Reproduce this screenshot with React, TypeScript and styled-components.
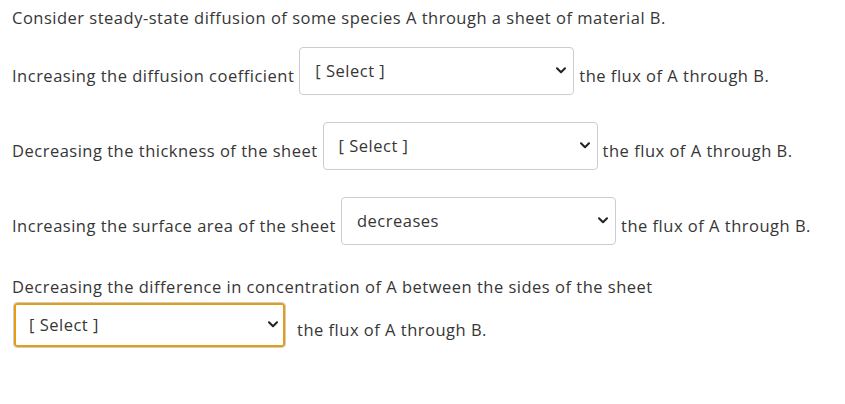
import React from 'react';
import styled, { createGlobalStyle } from 'styled-components';

const GlobalStyle = createGlobalStyle`
	body {
		margin: 0;
		background: #ffffff;
		font-family: 'Open Sans', Lato, sans-serif;
		font-size: 16.5px;
		letter-spacing: 0.5px;
		color: #363636;
	}
`;

const Page = styled.div`
	padding: 6px 12px 0 12px;
	display: flex;
	flex-direction: column;
`;

const Para = styled.p<{ $gap?: number }>`
	margin: 0;
	margin-top: ${(p) => p.$gap ?? 0}px;
	line-height: 24px;
`;

const Row = styled.div<{ $gap: number }>`
	display: flex;
	align-items: flex-start;
	margin-top: ${(p) => p.$gap}px;
`;

const Label = styled.span<{ $drop: number }>`
	line-height: 24px;
	margin-top: ${(p) => p.$drop}px;
	white-space: nowrap;
`;

const SelectWrap = styled.span<{ $width: number; $left?: number; $right?: number }>`
	position: relative;
	display: inline-block;
	width: ${(p) => p.$width}px;
	margin: 0 ${(p) => p.$right ?? 5}px 0 ${(p) => p.$left ?? 5}px;
	flex-shrink: 0;
`;

const NativeSelect = styled.select<{ $focused?: boolean; $height: number }>`
	appearance: none;
	-webkit-appearance: none;
	width: 100%;
	height: ${(p) => p.$height}px;
	box-sizing: border-box;
	padding: 0 28px 2px 15px;
	border: 1px solid #c9ced2;
	border-radius: 4px;
	background: #ffffff;
	font-family: 'Open Sans', Lato, sans-serif;
	font-size: 16.5px;
	letter-spacing: 0.5px;
	color: #363636;
	outline: none;
	box-shadow: ${(p) => (p.$focused ? 'inset 0 0 0 2px #e89d10' : 'none')};
`;

const Chevron = styled.svg`
	position: absolute;
	right: 8px;
	top: 50%;
	margin-top: -4px;
	pointer-events: none;
`;

const options = ['[ Select ]', 'increases', 'decreases', 'does not change'];

const Dropdown = ({
	value,
	width = 275,
	height = 48,
	focused,
	left,
	right,
}: {
	value: string;
	width?: number;
	height?: number;
	focused?: boolean;
	left?: number;
	right?: number;
}) => (
	<SelectWrap $width={width} $left={left} $right={right}>
		<NativeSelect $focused={focused} $height={height} defaultValue={value}>
			{options.map((o) => (
				<option key={o}>{o}</option>
			))}
		</NativeSelect>
		<Chevron width="10" height="7" viewBox="0 0 10 7">
			<path d="M1 1.2 L5 5.2 L9 1.2" fill="none" stroke="#222" strokeWidth="2" strokeLinecap="round" strokeLinejoin="round" />
		</Chevron>
	</SelectWrap>
);

const App = () => (
	<>
		<GlobalStyle />
		<Page>
			<Para>Consider steady-state diffusion of some species A through a sheet of material B.</Para>
			<Row $gap={17}>
				<Label $drop={17}>Increasing the diffusion coefficient</Label>
				<Dropdown value="[ Select ]" />
				<Label $drop={17}>the flux of A through B.</Label>
			</Row>
			<Row $gap={27}>
				<Label $drop={17}>Decreasing the thickness of the sheet</Label>
				<Dropdown value="[ Select ]" />
				<Label $drop={17}>the flux of A through B.</Label>
			</Row>
			<Row $gap={27}>
				<Label $drop={17}>Increasing the surface area of the sheet</Label>
				<Dropdown value="decreases" />
				<Label $drop={17}>the flux of A through B.</Label>
			</Row>
			<Para $gap={30}>Decreasing the difference in concentration of A between the sides of the sheet</Para>
			<Row $gap={3}>
				<Dropdown value="[ Select ]" width={273} height={46} focused left={1} right={11} />
				<Label $drop={16}>the flux of A through B.</Label>
			</Row>
		</Page>
	</>
);

export default App;
